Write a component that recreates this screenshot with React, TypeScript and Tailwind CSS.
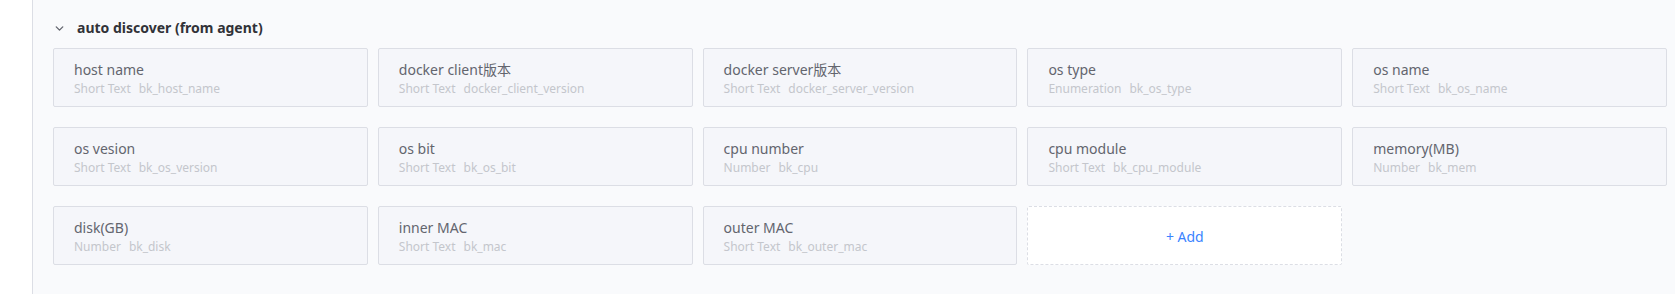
import { ChevronDown } from "lucide-react";

interface Field {
  name: string;
  type: string;
  id: string;
}

const FIELDS: Field[] = [
  { name: "host name", type: "Short Text", id: "bk_host_name" },
  { name: "docker client版本", type: "Short Text", id: "docker_client_version" },
  { name: "docker server版本", type: "Short Text", id: "docker_server_version" },
  { name: "os type", type: "Enumeration", id: "bk_os_type" },
  { name: "os name", type: "Short Text", id: "bk_os_name" },
  { name: "os vesion", type: "Short Text", id: "bk_os_version" },
  { name: "os bit", type: "Short Text", id: "bk_os_bit" },
  { name: "cpu number", type: "Number", id: "bk_cpu" },
  { name: "cpu module", type: "Short Text", id: "bk_cpu_module" },
  { name: "memory(MB)", type: "Number", id: "bk_mem" },
  { name: "disk(GB)", type: "Number", id: "bk_disk" },
  { name: "inner MAC", type: "Short Text", id: "bk_mac" },
  { name: "outer MAC", type: "Short Text", id: "bk_outer_mac" },
];

function FieldCard({ field }: { field: Field }) {
  return (
    <div className="flex h-[59px] flex-col justify-center rounded-[2px] border border-[#dcdee5] bg-[#f5f6fa] pl-[20px] pt-[2px]">
      <div className="text-[14px] leading-[19px] text-[#63656e]">{field.name}</div>
      <div className="mt-[1px] flex gap-[8px] text-[12px] leading-[17px] text-[#c4c6cc]">
        <span>{field.type}</span>
        <span>{field.id}</span>
      </div>
    </div>
  );
}

export default function App() {
  return (
    <div
      className="flex h-[294px] w-full bg-white"
      style={{ fontFamily: '"Noto Sans", "Noto Sans CJK SC", sans-serif' }}
    >
      <div className="w-[32px] shrink-0 bg-white" />
      <div className="flex-1 border-l border-[#dcdee5] bg-[#f9fafc] pl-[20px] pr-[8px]">
        <div className="mt-[18px] mb-[10px] flex h-[20px] items-center">
          <ChevronDown className="h-[13px] w-[13px] text-[#63656e]" strokeWidth={2.5} />
          <span className="ml-[11px] text-[14px] leading-[20px] font-bold text-[#313238]">
            auto discover (from agent)
          </span>
        </div>
        <div className="grid grid-cols-5 gap-x-[10px] gap-y-[20px]">
          {FIELDS.map((f) => (
            <FieldCard key={f.id} field={f} />
          ))}
          <button className="flex h-[59px] items-center justify-center rounded-[2px] border border-dashed border-[#dcdee5] bg-white pt-[2px] text-[14px] text-[#3a84ff]">
            + Add
          </button>
        </div>
      </div>
    </div>
  );
}
